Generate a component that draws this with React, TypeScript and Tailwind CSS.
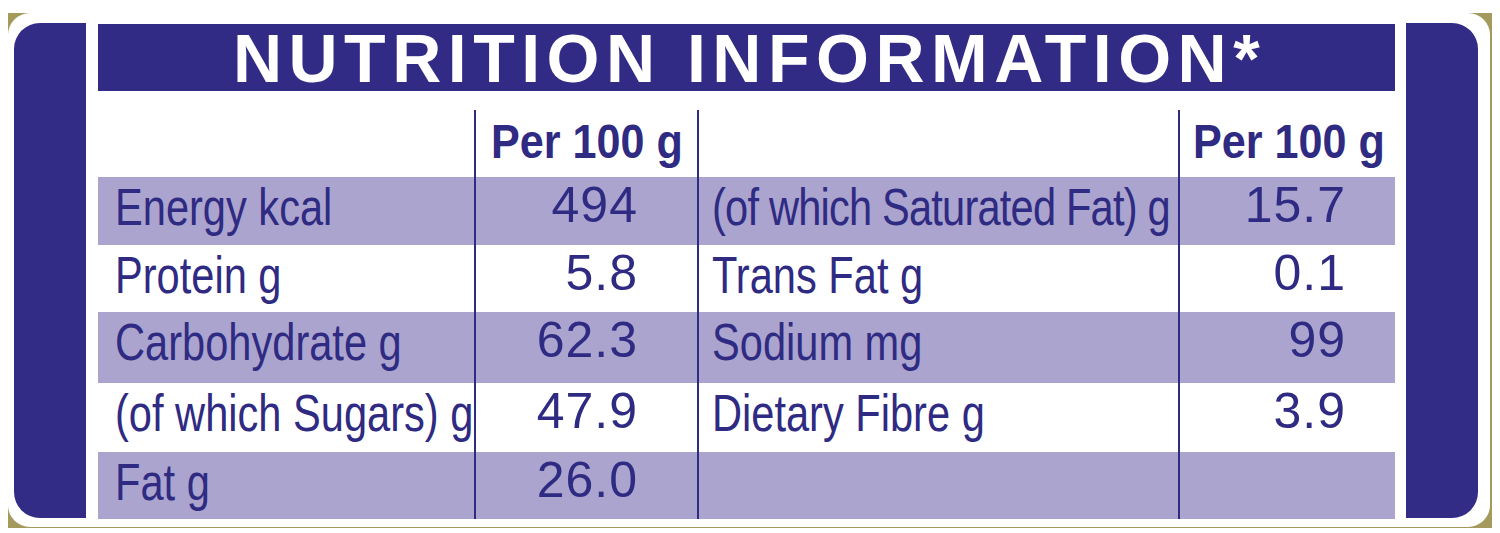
import React from "react";

type Row = {
  left: string;
  leftValue: string;
  right: string;
  rightValue: string;
  shaded: boolean;
  height: string;
};

const rows: Row[] = [
  { left: "Energy kcal", leftValue: "494", right: "(of which Saturated Fat) g", rightValue: "15.7", shaded: true, height: "h-[68px]" },
  { left: "Protein g", leftValue: "5.8", right: "Trans Fat g", rightValue: "0.1", shaded: false, height: "h-[67px]" },
  { left: "Carbohydrate g", leftValue: "62.3", right: "Sodium mg", rightValue: "99", shaded: true, height: "h-[71px]" },
  { left: "(of which Sugars) g", leftValue: "47.9", right: "Dietary Fibre g", rightValue: "3.9", shaded: false, height: "h-[69px]" },
  { left: "Fat g", leftValue: "26.0", right: "", rightValue: "", shaded: true, height: "h-[67px]" },
];

// condensed look: regular face squeezed horizontally
const label =
  "inline-block origin-left scale-x-[0.8] font-['Liberation_Sans',Arial,sans-serif] text-[52px] leading-[56px] text-[#2f2a82] whitespace-nowrap";
const value =
  "font-['Liberation_Sans',Arial,sans-serif] text-[50px] leading-[56px] tracking-[1px] text-[#2f2a82] text-right";
const perHead =
  "inline-block scale-x-[0.88] font-['Liberation_Sans',Arial,sans-serif] font-bold text-[49px] leading-[48px] text-[#2f2a82] whitespace-nowrap";

const App = () => {
  return (
    <div className="w-[1500px] h-[533px] bg-white pt-[13px] pl-[8px]">
      {/* gold backing with white rounded panel */}
      <div className="w-[1484px] h-[515px] bg-[#a49a5b] flex">
        <div className="w-[1482px] h-[514px] bg-white rounded-[22px] flex items-start pt-[10px] pl-[6px]">
          {/* left bar */}
          <div className="w-[72px] h-[495px] bg-[#332c87] rounded-l-[26px]" />

          {/* table */}
          <div className="ml-[12px] mt-[1px] w-[1297px] flex flex-col">
            {/* title */}
            <div className="h-[67px] bg-[#322b86] flex items-center justify-center pl-[6px] pt-[2px]">
              <span className="font-['Liberation_Sans',Arial,sans-serif] font-bold text-white text-[68px] leading-[67px] tracking-[6.5px] whitespace-nowrap">
                NUTRITION INFORMATION*
              </span>
            </div>

            <div className="h-[19px]" />

            {/* per 100 g row */}
            <div className="grid grid-cols-[376px_223px_481px_217px] h-[67px]">
              <div />
              <div className="border-l-2 border-[#2f2a82] flex justify-center pt-[7px]">
                <span className={perHead}>Per 100 g</span>
              </div>
              <div className="border-l-2 border-[#2f2a82]" />
              <div className="border-l-2 border-[#2f2a82] flex justify-center pt-[7px] pl-[2px]">
                <span className={perHead}>Per 100 g</span>
              </div>
            </div>

            {/* data rows */}
            {rows.map((r) => (
              <div
                key={r.left}
                className={`grid grid-cols-[376px_223px_481px_217px] ${r.height} ${r.shaded ? "bg-[#aaa4cf]" : "bg-white"}`}
              >
                <div className="pl-[17px] pt-[2px]">
                  <span className={label}>{r.left}</span>
                </div>
                <div className={`border-l-2 border-[#2f2a82] pr-[59px] ${value}`}>{r.leftValue}</div>
                <div className="border-l-2 border-[#2f2a82] pl-[13px] pt-[2px]">
                  <span className={`${label} ${r.right.length > 20 ? "tracking-[-1px]" : ""}`}>{r.right}</span>
                </div>
                <div className={`border-l-2 border-[#2f2a82] pr-[49px] ${value}`}>{r.rightValue}</div>
              </div>
            ))}
          </div>

          {/* right bar */}
          <div className="ml-[11px] w-[72px] h-[495px] bg-[#332c87] rounded-r-[26px]" />
        </div>
      </div>
    </div>
  );
};

export default App;
